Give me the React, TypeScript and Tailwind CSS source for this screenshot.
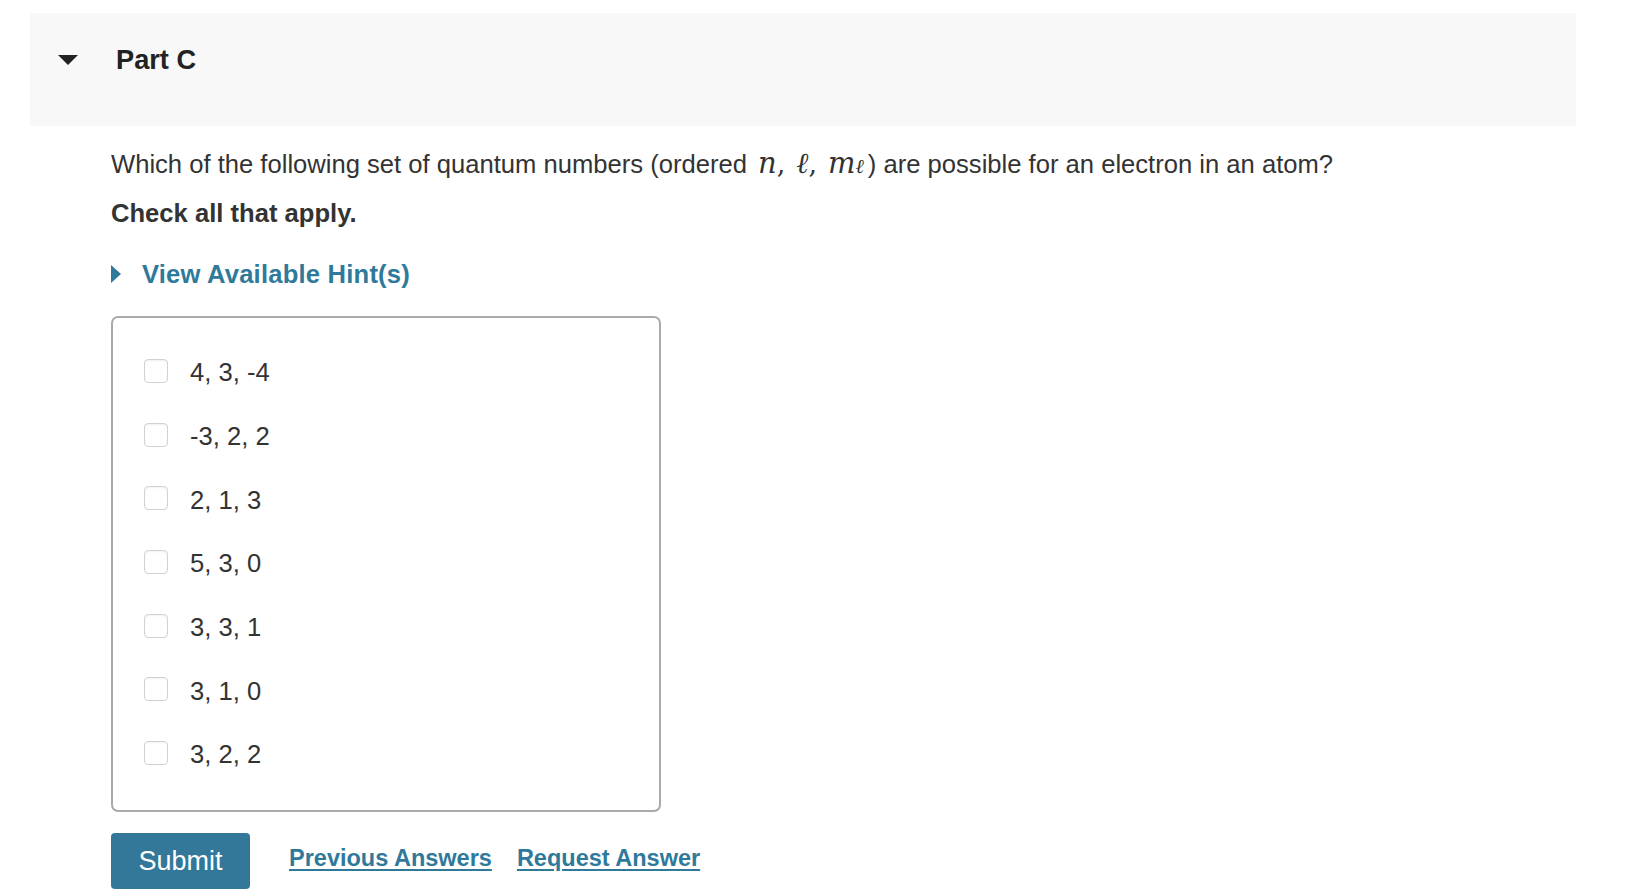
import React from "react";

const options = ["4, 3, -4", "-3, 2, 2", "2, 1, 3", "5, 3, 0", "3, 3, 1", "3, 1, 0", "3, 2, 2"];

const sans = { fontFamily: '"Liberation Sans", Arial, Helvetica, sans-serif' };
const mathFont = { fontFamily: '"DejaVu Serif", "Liberation Serif", serif' };

function MathVar({ children }: { children: React.ReactNode }) {
  return (
    <span className="italic text-[29px] leading-[30px]" style={mathFont}>
      {children}
    </span>
  );
}

export default function App() {
  return (
    <div className="min-h-[896px] bg-white pt-[13px] text-[#333333]" style={sans}>
      {/* part header */}
      <div className="ml-[30px] w-[1546px] h-[113px] bg-[#f8f8f8] flex items-start pt-[31px] pl-[28px]">
        <div className="flex items-center h-[32px]">
          <span className="block w-0 h-0 border-l-[10px] border-r-[10px] border-t-[10px] border-l-transparent border-r-transparent border-t-[#222222] mt-[-1px]" />
        </div>
        <h2 className="ml-[38px] text-[27.2px] leading-[32px] font-bold text-[#222222]">Part C</h2>
      </div>

      <div className="ml-[111px]">
        <p className="mt-[22px] text-[25.6px] leading-[30px]">
          Which of the following set of quantum numbers (ordered{" "}
          <span className="ml-[4px]">
            <MathVar>n</MathVar>
            <span style={mathFont} className="text-[27px] leading-[30px]">,</span>
            <span className="ml-[11px]">
              <MathVar>ℓ</MathVar>
            </span>
            <span style={mathFont} className="text-[27px] leading-[30px]">,</span>
            <span className="ml-[11px]">
              <MathVar>m</MathVar>
            </span>
            <span className="italic text-[20px] leading-[30px]" style={mathFont}>
              ℓ
            </span>
          </span>
          <span className="ml-[4px]">)</span> are possible for an electron in an atom?
        </p>

        <p className="mt-[17px] text-[25.6px] leading-[30px] font-bold">Check all that apply.</p>

        <button className="mt-[31px] flex items-center text-[25.6px] leading-[30px] font-bold text-[#2f7a9b]">
          <span className="block w-0 h-0 border-t-[9px] border-b-[9px] border-l-[10px] border-t-transparent border-b-transparent border-l-[#2f7a9b]" />
          <span className="ml-[21px] tracking-[0.2px]">View Available Hint(s)</span>
        </button>

        {/* choices */}
        <div className="mt-[27px] w-[550px] h-[496px] border-2 border-[#aaaaaa] rounded-[7px] pt-[21px] pl-[31px]">
          {options.map((o) => (
            <label key={o} className="flex items-center h-[63.7px]">
              <span className="block w-[24px] h-[24px] rounded-[4px] border border-[#d2d2d2] bg-white shadow-[inset_0_1px_2px_rgba(0,0,0,0.06)]" />
              <span className="ml-[22px] text-[25.6px] leading-[30px] mt-[3px]">{o}</span>
            </label>
          ))}
        </div>

        <div className="mt-[21px] flex items-center">
          <button className="w-[139px] h-[56px] rounded-[4px] bg-[#337799] text-white text-[27px] leading-[56px]">
            Submit
          </button>
          <a href="#" className="ml-[39px] mt-[-4px] text-[23.5px] font-bold text-[#2f7a9b] underline decoration-2 underline-offset-[3px]">
            Previous Answers
          </a>
          <a href="#" className="ml-[25px] mt-[-4px] text-[23.5px] font-bold text-[#2f7a9b] underline decoration-2 underline-offset-[3px]">
            Request Answer
          </a>
        </div>
      </div>
    </div>
  );
}
